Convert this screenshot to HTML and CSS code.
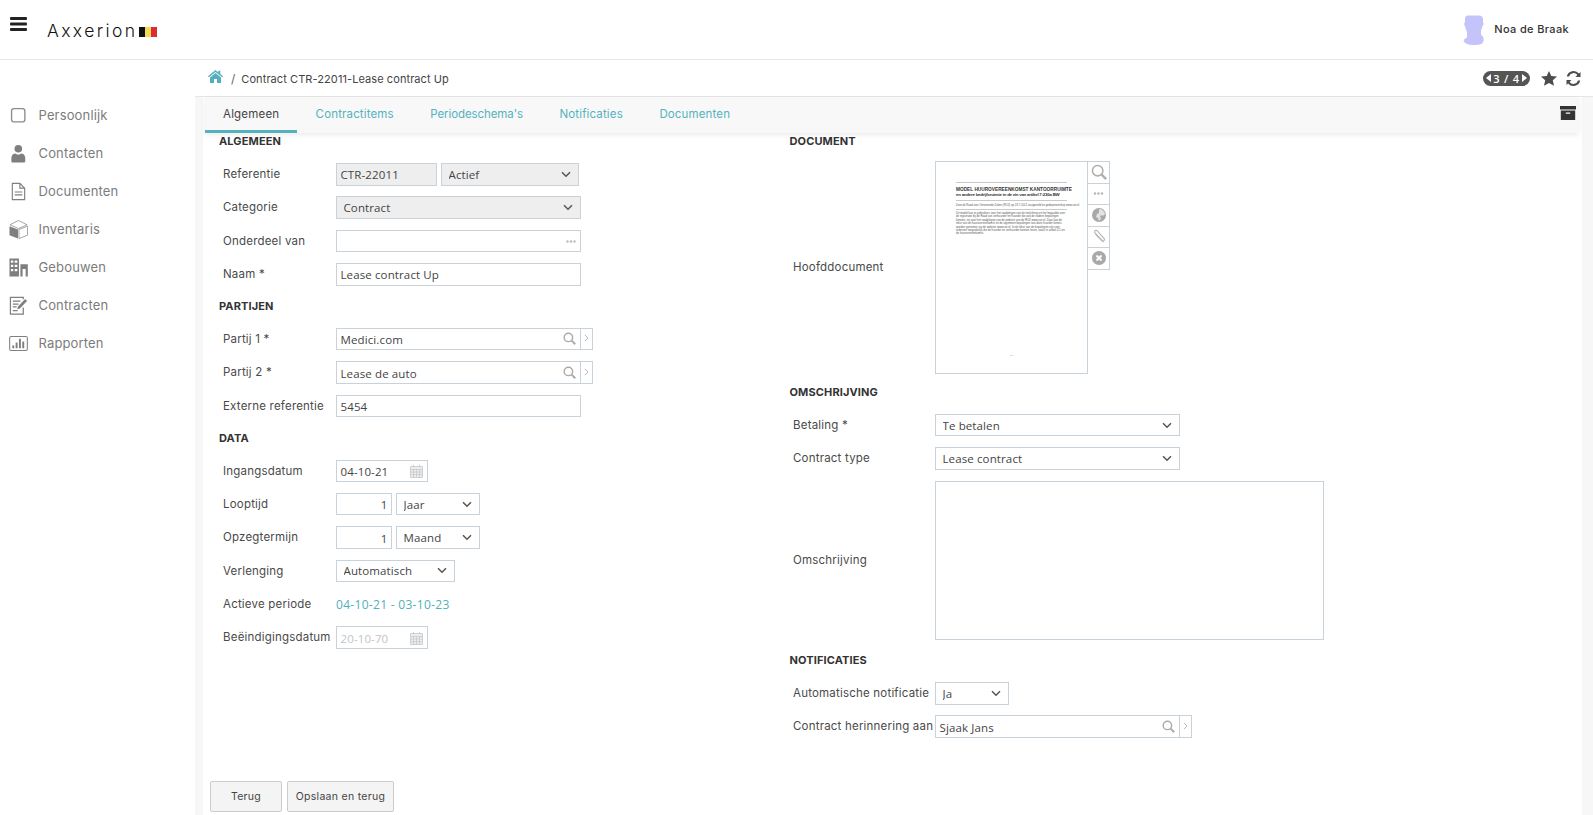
FILE: index.html
```html
<!DOCTYPE html>
<html lang="nl">
<head>
<meta charset="utf-8">
<title>Contract CTR-22011</title>
<link rel="stylesheet" href="styles.css">
</head>
<body>
<div class="app">
  <header class="topbar">
    <svg class="burger" width="17" height="14" viewBox="0 0 17 14"><rect y="0" width="17" height="3" rx="1"/><rect y="5.5" width="17" height="3" rx="1"/><rect y="11" width="17" height="3" rx="1"/></svg>
    <div class="logo">Axxerion</div>
    <div class="flag"><i class="flag-b"></i><i class="flag-y"></i><i class="flag-r"></i></div>
    <div class="user">
      <svg class="avatar" width="22" height="30" viewBox="0 0 22 30"><path d="M5 0.5h11c2.500 0 4 1.500 4 3.500v3c1 1 .8 3-.5 4-.5 2-1 3-1.500 4v4c0 1 1 2 2 2.500 1 2 .8 5-.5 6.500-1.500 1.500-4 2-7.500 2-4 0-7.500-.5-9.500-1.800C1 27 .2 25.500 1 24.500c1.500-1 3-1.500 3-3v-4.500C3 15 2.500 13 2 11.500 1 10 1 8 2 7V4c0-2 1-3.500 3-3.500z"/></svg>
      <span class="user-name">Noa de Braak</span>
    </div>
  </header>
  <div class="layout">
    <nav class="sidebar">
      <a class="nav-item"><svg class="nav-icon" viewBox="0 0 20 20"><rect x="2.700" y="2.700" width="14" height="14" rx="2.500" fill="none" stroke="#8a8a8a" stroke-width="1.400"/></svg>Persoonlijk</a>
      <a class="nav-item"><svg class="nav-icon" viewBox="0 0 20 20"><circle cx="9.800" cy="5" r="4"/><path d="M2.500 18.500v-4c0-3 2.500-4.500 4-4.500 1 .8 2 1.200 3.300 1.200s2.300-.4 3.300-1.200c1.500 0 4 1.500 4 4.500v4c0 .6-.8 1-1.500 1H4c-.7 0-1.500-.4-1.500-1z"/></svg>Contacten</a>
      <a class="nav-item"><svg class="nav-icon" viewBox="0 0 20 20"><g fill="none" stroke="#7f7f7f" stroke-width="1.200"><path d="M3.500 1.500h8l5 5v12h-13zM11.500 1.500v5h5M6 10.500h8M6 13.500h8"/></g></svg>Documenten</a>
      <a class="nav-item"><svg class="nav-icon" viewBox="0 0 20 20"><path d="M.500 6.500l9 3.500v9.500l-9-3.500z"/><path d="M19.500 6.500l-9 3.500v9.500l9-3.500z" fill="none" stroke="#8a8a8a" stroke-width=".8"/><path d="M10 .500l9 4.500-9 4-9-4z" fill="none" stroke="#8a8a8a" stroke-width=".8"/></svg>Inventaris</a>
      <a class="nav-item"><svg class="nav-icon" viewBox="0 0 20 20"><path d="M.500 .500h10v19H.500zM2 2.500v2.500h2.500V2.500zM6 2.500v2.500h2.800V2.500zM2 7v2.500h2.500V7zM6 7v2.500h2.800V7zM2 11.500V14h2.500v-2.500zM6 11.500V14h2.800v-2.500z" fill-rule="evenodd"/><path d="M12 6.500h7.800v13h-2.300v-8h-3.200v8H12z"/></svg>Gebouwen</a>
      <a class="nav-item"><svg class="nav-icon" viewBox="0 0 20 20"><g fill="none" stroke="#7f7f7f" stroke-width="1.300"><path d="M15 12v7H1.500V1.500H15v2"/><path d="M4 5.500h8M4 8.500h6M4 11.500h4M4 15.500h5"/></g><path d="M8.500 14l1-3L17 3.200l2 2-7.500 8z"/></svg>Contracten</a>
      <a class="nav-item"><svg class="nav-icon" viewBox="0 0 20 20"><rect x=".700" y="2.700" width="18.600" height="14.600" rx="1.500" fill="none" stroke="#7f7f7f" stroke-width="1.100"/><rect x="3.500" y="12" width="2" height="3"/><rect x="7" y="9" width="2" height="6"/><rect x="10.500" y="5" width="2" height="10"/><rect x="14" y="8" width="2" height="7"/></svg>Rapporten</a>
    </nav>
    <div class="content">
      <div class="crumbs">
        <svg class="home" width="15" height="13" viewBox="0 0 15 13"><path d="M7.500 0L0 6.200l.9 1.100L7.500 1.900l6.600 5.400.9-1.100-2.700-2.200V.8h-2v1.800z"/><path d="M7.500 3L2 7.500V13h4V9h3v4h4V7.500z"/></svg>
        <span class="crumb-sep">/</span>
        <span class="crumb-text">Contract CTR-22011-Lease contract Up</span>
        <div class="crumb-tools">
          <div class="pager">
            <svg width="5" height="8" viewBox="0 0 5 8"><path d="M5 0v8L0 4z"/></svg>
            <span class="pager-text">3 / 4</span>
            <svg width="5" height="8" viewBox="0 0 5 8"><path d="M0 0v8l5-4z"/></svg>
          </div>
          <svg class="tool" width="16" height="15" viewBox="0 0 16 15"><path d="M8 0l2.300 5 5.700.6-4.200 3.700 1.200 5.500L8 12l-5 2.800 1.200-5.500L0 5.600 5.700 5z"/></svg>
          <svg class="tool" width="15" height="15" viewBox="0 0 15 15"><path d="M14.500 1v5h-5l1.900-1.900A4.700 4.700 0 0 0 3 5.500H.8A6.900 6.900 0 0 1 12.900 2.600z"/><path d="M.5 14V9h5l-1.900 1.900A4.700 4.700 0 0 0 12 9.500h2.200A6.900 6.900 0 0 1 2.100 12.400z"/></svg>
        </div>
      </div>
      <main class="panel">
        <div class="card">
          <div class="tabs">
            <a class="tab tab-active">Algemeen</a>
            <a class="tab">Contractitems</a>
            <a class="tab tab-tight">Periodeschema's</a>
            <a class="tab">Notificaties</a>
            <a class="tab">Documenten</a>
            <svg class="archive" width="16" height="14" viewBox="0 0 16 14"><path d="M0 0h16v3.500H0z"/><path d="M.800 4.500h14.400V14H.800zM5.800 6.500v1.200h4.400V6.500z" fill-rule="evenodd"/></svg>
          </div>
          <form class="form">
            <div class="col col-left">
              <section class="section">
                <h2 class="head">ALGEMEEN</h2>
                <div class="row"><label class="lbl">Referentie</label>
                  <input class="field field-ref is-gray" value="CTR-22011">
                  <select class="field sel sel-status is-gray"><option>Actief</option></select></div>
                <div class="row"><label class="lbl">Categorie</label>
                  <select class="field sel w-full is-gray"><option>Contract</option></select></div>
                <div class="row"><label class="lbl">Onderdeel van</label>
                  <div class="field box w-full"><span class="box-text"></span><svg class="dots" width="10" height="3" viewBox="0 0 10 3"><circle cx="1.500" cy="1.500" r="1.200"/><circle cx="5" cy="1.500" r="1.200"/><circle cx="8.500" cy="1.500" r="1.200"/></svg></div></div>
                <div class="row"><label class="lbl">Naam *</label>
                  <input class="field w-full" value="Lease contract Up"></div>
              </section>
              <section class="section">
                <h2 class="head">PARTIJEN</h2>
                <div class="row"><label class="lbl">Partij 1 *</label>
                  <div class="field box w-full"><span class="box-text">Medici.com</span><svg class="search" width="13" height="13" viewBox="0 0 12 12"><circle cx="5" cy="5" r="3.900"/><path d="M8 8l3.300 3.300" stroke-width="1.800"/></svg></div>
                  <span class="go"><svg width="5" height="8" viewBox="0 0 5 8"><path d="M1 1l3 3-3 3"/></svg></span></div>
                <div class="row"><label class="lbl">Partij 2 *</label>
                  <div class="field box w-full"><span class="box-text">Lease de auto</span><svg class="search" width="13" height="13" viewBox="0 0 12 12"><circle cx="5" cy="5" r="3.900"/><path d="M8 8l3.300 3.300" stroke-width="1.800"/></svg></div>
                  <span class="go"><svg width="5" height="8" viewBox="0 0 5 8"><path d="M1 1l3 3-3 3"/></svg></span></div>
                <div class="row"><label class="lbl">Externe referentie</label>
                  <input class="field w-full" value="5454"></div>
              </section>
              <section class="section">
                <h2 class="head">DATA</h2>
                <div class="row"><label class="lbl">Ingangsdatum</label>
                  <div class="field box w-date"><span class="box-text">04-10-21</span><svg class="cal" width="13" height="14" viewBox="0 0 13 14"><path d="M.500 2.500h12v11H.500zM.500 5.500h12M.500 8h12M.500 10.700h12M3.500 5.500v8M6.500 5.500v8M9.500 5.500v8M3.500 .800v2.500M9.500 .800v2.500"/></svg></div></div>
                <div class="row"><label class="lbl">Looptijd</label>
                  <input class="field w-num" value="1">
                  <select class="field sel w-unit"><option>Jaar</option></select></div>
                <div class="row"><label class="lbl">Opzegtermijn</label>
                  <input class="field w-num" value="1">
                  <select class="field sel w-unit"><option>Maand</option></select></div>
                <div class="row"><label class="lbl">Verlenging</label>
                  <select class="field sel w-ext"><option>Automatisch</option></select></div>
                <div class="row"><label class="lbl">Actieve periode</label>
                  <span class="period">04-10-21 - 03-10-23</span></div>
                <div class="row"><label class="lbl">Beëindigingsdatum</label>
                  <div class="field box w-date"><span class="box-text is-muted">20-10-70</span><svg class="cal" width="13" height="14" viewBox="0 0 13 14"><path d="M.500 2.500h12v11H.500zM.500 5.500h12M.500 8h12M.500 10.700h12M3.500 5.500v8M6.500 5.500v8M9.500 5.500v8M3.500 .800v2.500M9.500 .800v2.500"/></svg></div></div>
              </section>
            </div>
            <div class="col col-right">
              <section class="section">
                <h2 class="head head-tight">DOCUMENT</h2>
                <div class="row row-doc"><label class="lbl">Hoofddocument</label>
                  <div class="doc">
                    <div class="doc-rule doc-rule-top"></div>
                    <div class="doc-title">MODEL HUUROVEREENKOMST KANTOORRUIMTE</div>
                    <div class="doc-title doc-title-sub">en andere bedrijfsruimte in de zin van artikel 7:230a BW</div>
                    <div class="doc-rule doc-rule-mid"></div>
                    <div class="doc-small">Door de Raad voor Onroerende Zaken (ROZ) op 23-7-2012 vastgesteld en gedeponeerd op www.roz.nl.</div>
                    <div class="doc-rule doc-rule-thin"></div>
                    <div class="doc-body">Dit model kan in gebruikers voor het raadplegen van de toelichting en het bepaalde over de registratie bij de Raad van verhuurder en huurder die ook de nadere bepalingen kennen, en voor het raadplegen van de website van de ROZ www.roz.nl. Daar kan de tekst van dit huurovereenkomst en de algemene bepalingen van deze huurder kennis worden genomen via de website www.roz.nl. In de tekst van de bepalingen zijn voor iedereen toegankelijk die de huurder en verhuurder kunnen lezen, zoals in artikel 4.1 en de huurovereenkomst.</div>
                    <div class="doc-foot">—</div>
                  </div>
                  <div class="doc-tools">
                    <span class="doc-tool"><svg width="16" height="16" viewBox="0 0 12 12" fill="none" stroke="#b0b0b0" stroke-width="1.200"><circle cx="5" cy="5" r="3.900"/><path d="M8 8l3.300 3.300" stroke-width="1.800"/></svg></span>
                    <span class="doc-tool"><svg width="11" height="3" viewBox="0 0 10 3" fill="#b5b5b5"><circle cx="1.500" cy="1.500" r="1.200"/><circle cx="5" cy="1.500" r="1.200"/><circle cx="8.500" cy="1.500" r="1.200"/></svg></span>
                    <span class="doc-tool"><svg width="14" height="14" viewBox="0 0 14 14"><circle cx="7" cy="7" r="7" fill="#a9a9a9"/><path d="M7 1c3 0 5.500 2 6 5l-2 2-1-1-2 1 1 3-2 2-1-3-2-1 1-3 2-1z" fill="#e2e2e2"/></svg></span>
                    <span class="doc-tool"><svg width="15" height="15" viewBox="0 0 15 15" fill="none" stroke="#b5b5b5" stroke-width="1.100"><path d="M12.500 13l-8.500-9c-1-1.200-.2-2.600 1-2.700.6 0 1 .3 1.500.8l6.500 7.200c1.500 1.800-1 3.600-2.500 2L4.300 5.200"/></svg></span>
                    <span class="doc-tool"><svg width="14" height="14" viewBox="0 0 14 14"><circle cx="7" cy="7" r="7" fill="#a9a9a9"/><path d="M4.500 4.500l5 5M9.500 4.500l-5 5" stroke="#fff" stroke-width="2"/></svg></span>
                  </div>
                </div>
              </section>
              <section class="section">
                <h2 class="head">OMSCHRIJVING</h2>
                <div class="row"><label class="lbl">Betaling *</label>
                  <select class="field sel w-wide"><option>Te betalen</option></select></div>
                <div class="row"><label class="lbl">Contract type</label>
                  <select class="field sel w-wide"><option>Lease contract</option></select></div>
                <div class="row row-area"><label class="lbl">Omschrijving</label>
                  <textarea class="field area"></textarea></div>
              </section>
              <section class="section">
                <h2 class="head">NOTIFICATIES</h2>
                <div class="row"><label class="lbl">Automatische notificatie</label>
                  <select class="field sel w-yes"><option>Ja</option></select></div>
                <div class="row"><label class="lbl">Contract herinnering aan</label>
                  <div class="field box w-wide"><span class="box-text">Sjaak Jans</span><svg class="search" width="13" height="13" viewBox="0 0 12 12"><circle cx="5" cy="5" r="3.900"/><path d="M8 8l3.300 3.300" stroke-width="1.800"/></svg></div>
                  <span class="go"><svg width="5" height="8" viewBox="0 0 5 8"><path d="M1 1l3 3-3 3"/></svg></span></div>
              </section>
            </div>
          </form>
          <div class="actions">
            <button class="btn btn-back" type="button">Terug</button>
            <button class="btn btn-save" type="button">Opslaan en terug</button>
          </div>
        </div>
      </main>
    </div>
  </div>
</div>
</body>
</html>
```
FILE: styles.css
```css
* { box-sizing: border-box; }
html, body { margin: 0; height: 100%; background: #fff; }
body { font-family: Inter, "Liberation Sans", sans-serif; color: #444; overflow: hidden; }
.app { height: 815px; display: flex; flex-direction: column; }

.topbar { height: 60px; flex: none; border-bottom: 1px solid #e8e8e8; display: flex; align-items: center; position: relative; }
.burger { fill: #222; margin: -12px 0 0 10px; }
.logo { margin: 3px 0 0 20px; font-family: Inter, sans-serif; font-weight: 300; font-size: 17.500px; letter-spacing: 2.400px; color: #111; line-height: 20px; }
.flag { display: flex; margin: 5px 0 0 1px; height: 10px; }
.flag i { display: block; width: 6px; height: 10px; }
.flag-b { background: #111; }
.flag-y { background: #f4d75a; }
.flag-r { background: #dd2e2e; }
.user { margin-left: auto; display: flex; align-items: center; padding-right: 24px; }
.avatar { fill: #c4c4fb; margin-right: 9px; }
.user-name { font-size: 11px; font-weight: 500; color: #333; letter-spacing: .35px; margin-top: -2px; }

.layout { flex: 1; display: flex; min-height: 0; }
.sidebar { width: 195px; flex: none; padding-top: 36px; }
.nav-item { height: 38px; display: flex; align-items: center; font-size: 13px; letter-spacing: .15px; color: #7c7c7c; padding-left: 9px; }
.nav-icon { width: 19px; height: 19px; fill: #7f7f7f; margin-right: 10.500px; flex: none; }

.content { flex: 1; min-width: 0; display: flex; flex-direction: column; }
.crumbs { height: 36px; flex: none; display: flex; align-items: center; padding-left: 13px; padding-right: 12px; }
.home { fill: #55afbb; margin-top: -3px; }
.crumb-sep { margin-left: 8px; font-size: 12px; color: #666; }
.crumb-text { margin-left: 6px; font-size: 11px; color: #444; letter-spacing: .08px; margin-top: 2px; }
.crumb-tools { margin-left: auto; display: flex; align-items: center; }
.pager { width: 47px; height: 15px; border-radius: 8px; background: #555; display: flex; align-items: center; justify-content: space-between; padding: 0 3px; fill: #fff; margin-right: 11px; }
.pager-text { color: #fff; font-family: "Open Sans", sans-serif; font-size: 11px; font-weight: 600; letter-spacing: .8px; }
.tool { fill: #4d4d4d; margin-right: 9px; }
.tool:last-child { margin-right: 0; }

.panel { flex: 1; min-height: 0; background: #f7f7f7; border-top: 1px solid #e6e6e6; padding: 0 11px 0 8px; display: flex; }
.card { flex: 1; min-width: 0; background: #fff; display: flex; flex-direction: column; }
.tabs { height: 36px; flex: none; margin: 0 3px 0 2px; background: #f8f8f8; box-shadow: 0 2px 5px rgba(0,0,0,.08); display: flex; align-items: stretch; position: relative; }
.tab { display: flex; align-items: center; padding: 0 18.250px; font-size: 11.500px; letter-spacing: .15px; color: #55b2bf; border-bottom: 3px solid transparent; }
.tab-tight { letter-spacing: -.1px; }
.tab-active { color: #444; border-bottom-color: #55b2bf; padding: 0 18px; letter-spacing: .2px; }
.archive { fill: #333; margin: 9px 3px 0 auto; }

.form { flex: 1; min-height: 0; display: grid; grid-template-columns: 570px 1fr; padding-left: 16px; }
.section { padding-bottom: 1.400px; }
.head { margin: 0 0 14px; height: 16px; line-height: 16px; font-size: 11px; font-weight: 700; color: #333; letter-spacing: .12px; }
.head-tight { margin-bottom: 12px; }
.col-right .head { padding-left: .5px; }
.row { display: flex; align-items: flex-start; height: 22.500px; margin-bottom: 10.900px; padding-left: 4px; }
.col-left .lbl { width: 113px; }
.col-right .lbl { width: 142px; }
.lbl { flex: none; font-size: 11.500px; color: #4a4a4a; line-height: 23px; letter-spacing: .2px; white-space: nowrap; }

.field { height: 22.500px; border: 1px solid #c8d2da; border-radius: 0; background: #fff; font-family: "Open Sans", sans-serif; font-size: 11.500px; letter-spacing: .12px; color: #444; padding: 1px 3.500px 0; margin: 0; outline: none; }
.is-gray { background-color: #eee; }
.w-full { width: 245px; }
.field-ref { width: 101px; margin-right: 4px; }
.sel { appearance: none; -webkit-appearance: none; padding: 0 0 0 6.500px; background-image: url("data:image/svg+xml,%3Csvg xmlns='http://www.w3.org/2000/svg' width='10' height='7' viewBox='0 0 10 7'%3E%3Cpath d='M1 1.200l4 4 4-4' fill='none' stroke='%23555' stroke-width='1.500'/%3E%3C/svg%3E"); background-repeat: no-repeat; background-position: right 7px center; }
.sel-status { width: 138px; }
.box { display: flex; align-items: center; justify-content: space-between; padding-right: 4px; }
.box-text { white-space: nowrap; }
.is-muted { color: #c4c4c4; }
.dots { fill: #bbb; }
.search { fill: none; stroke: #aaa; stroke-width: 1.300; margin: -2px 0 0; }
.go { width: 12px; height: 22.500px; border: 1px solid #c8d2da; border-left: 0; display: flex; align-items: center; justify-content: center; flex: none; }
.go svg { fill: none; stroke: #bbb; stroke-width: 1; margin-top: -2px; }
.w-date { width: 92px; }
.cal { fill: #eee; stroke: #c9cdd0; stroke-width: .9; margin-top: -1px; }
.w-num { width: 56px; margin-right: 4px; text-align: right; }
.w-unit { width: 84px; }
.w-ext { width: 119px; }
.period { font-family: "Open Sans", sans-serif; font-size: 12px; letter-spacing: .3px; color: #4fb0bd; line-height: 23px; }
.w-wide { width: 245px; }
.w-yes { width: 74px; }

.row-doc { height: 213px; margin-bottom: 8.600px; align-items: stretch; }
.row-doc .lbl { align-self: center; }
.doc { width: 153px; height: 213px; border: 1px solid #c8d2da; padding: 20px 20px 0 20px; position: relative; overflow: hidden; }
.doc-rule { height: 1px; background: #c8c8c8; }
.doc-rule-top { margin-bottom: 4px; }
.doc-rule-mid { margin: 3px 0 3px; }
.doc-rule-thin { margin: 2px 0 2px; }
.doc-title { font-family: "Liberation Sans", sans-serif; font-weight: 700; font-size: 4.750px; line-height: 5px; color: #333; white-space: nowrap; }
.doc-title-sub { font-size: 4.400px; letter-spacing: -.23px; }
.doc-small { font-family: "Liberation Sans", sans-serif; font-size: 2.700px; line-height: 3px; color: #555; white-space: nowrap; }
.doc-body { font-family: "Liberation Sans", sans-serif; font-size: 2.800px; line-height: 3.400px; color: #555; }
.doc-foot { position: absolute; left: 0; right: 0; top: 191px; text-align: center; font-size: 3px; color: #777; }
.doc-tools { width: 22px; display: flex; flex-direction: column; align-self: flex-start; }
.doc-tool { height: 22.500px; margin-top: -1px; border: 1px solid #c8d2da; border-left: 0; display: flex; align-items: center; justify-content: center; }
.doc-tool:first-child { margin-top: 0; }

.row-area { height: 159px; }
.row-area .lbl { align-self: center; }
.area { width: 389px; height: 159px; resize: none; display: block; }

.actions { flex: none; display: flex; gap: 5px; padding: 0 0 3px 7px; }
.btn { height: 31px; background: #f4f4f4; border: 1px solid #ccc; border-radius: 2px; font-family: Inter, sans-serif; font-size: 10.500px; letter-spacing: .3px; color: #444; padding: 0; }
.btn-back { width: 72px; }
.btn-save { width: 107px; }
```
